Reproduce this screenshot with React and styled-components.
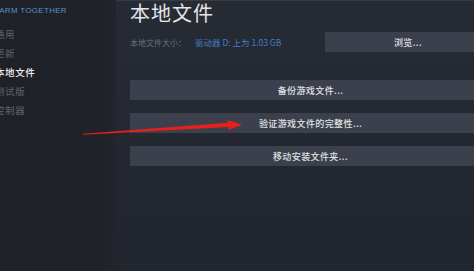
import React from "react";
import styled, { createGlobalStyle } from "styled-components";

const GlobalStyle = createGlobalStyle`
  html, body {
    margin: 0;
    padding: 0;
    background: #22262e;
    overflow: hidden;
  }
  body {
    font-family: "Noto Sans CJK SC", "Noto Sans", sans-serif;
  }
`;

const Window = styled.div`
  position: relative;
  width: 474px;
  height: 271px;
  display: flex;
  overflow: hidden;
  background: #23272f;
`;

const Sidebar = styled.div`
  width: 116px;
  flex-shrink: 0;
  background: linear-gradient(90deg, #1e2128 0%, #1f2229 85%, #22252c 100%);
  padding-top: 5px;
  box-sizing: border-box;
  overflow: hidden;
`;

const GameName = styled.div`
  margin-left: -14px;
  font-family: "Liberation Sans", Arial, sans-serif;
  font-size: 8px;
  letter-spacing: 0.3px;
  color: #5d8fc9;
  white-space: nowrap;
  height: 12px;
  line-height: 12px;
  margin-bottom: 8px;
`;

const NavItem = styled.div`
  margin-left: -5px;
  height: 19px;
  line-height: 19px;
  font-size: 9.5px;
  letter-spacing: 0.6px;
  white-space: nowrap;
  color: ${(p) => (p.$active ? "#eceef1" : "#5e636c")};
  font-weight: ${(p) => (p.$active ? 500 : 400)};
`;

const Main = styled.div`
  flex: 1;
  min-width: 0;
  padding: 0 0 0 14px;
  background: linear-gradient(180deg, #272b34 0%, #23272f 60%, #21252d 100%);
  border-top: 1px solid #363a43;
  box-sizing: border-box;
`;

const Content = styled.div`
  width: 361px;
  display: flex;
  flex-direction: column;
`;

const Title = styled.h1`
  margin: 0;
  height: 26px;
  line-height: 24px;
  font-size: 20px;
  font-weight: 400;
  letter-spacing: 1px;
  color: #e4e6e9;
`;

const SizeRow = styled.div`
  display: flex;
  align-items: center;
  margin-top: 5px;
  height: 20px;
`;

const SizeLabel = styled.span`
  font-size: 8px;
  color: #6d727b;
  white-space: nowrap;
`;

const SizeValue = styled.span`
  margin-left: 9px;
  font-size: 8.5px;
  color: #3f7fc4;
  white-space: nowrap;
`;

const Spacer = styled.div`
  flex: 1;
`;

const Button = styled.div`
  display: flex;
  align-items: center;
  justify-content: center;
  height: 20px;
  width: ${(p) => p.$width || "100%"};
  background: #3b404c;
  color: #e0e2e6;
  font-size: 9px;
  font-weight: 500;
  letter-spacing: 0.4px;
  white-space: nowrap;
  box-sizing: border-box;
`;

const ButtonStack = styled.div`
  display: flex;
  flex-direction: column;
  gap: 13px;
  margin-top: 28px;
`;

const Arrow = styled.svg`
  position: absolute;
  left: 80px;
  top: 116px;
  pointer-events: none;
`;

export default function App() {
  return (
    <>
      <GlobalStyle />
      <Window>
        <Sidebar>
          <GameName>SWARM TOGETHER</GameName>
          <NavItem>通用</NavItem>
          <NavItem>更新</NavItem>
          <NavItem $active>本地文件</NavItem>
          <NavItem>测试版</NavItem>
          <NavItem>控制器</NavItem>
        </Sidebar>
        <Main>
          <Content>
            <Title>本地文件</Title>
            <SizeRow>
              <SizeLabel>本地文件大小：</SizeLabel>
              <SizeValue>驱动器 D: 上为 1.03 GB</SizeValue>
              <Spacer />
              <Button $width="166px">浏览...</Button>
            </SizeRow>
            <ButtonStack>
              <Button>备份游戏文件...</Button>
              <Button>验证游戏文件的完整性...</Button>
              <Button>移动安装文件夹...</Button>
            </ButtonStack>
          </Content>
        </Main>
        <Arrow width="170" height="24" viewBox="0 0 170 24">
          <path d="M3 17.8 L148 6.8 L147.5 4 L162 8.8 L148.8 14 L148.4 11 L3 18.8 Z" fill="#e8201b" />
        </Arrow>
      </Window>
    </>
  );
}
